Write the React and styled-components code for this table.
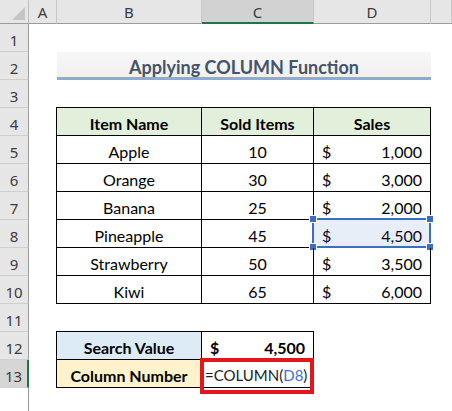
import React from "react";
import styled, { createGlobalStyle } from "styled-components";

const Global = createGlobalStyle`
  html, body { margin: 0; padding: 0; background: #fff; }
  body { font-family: Lato, "Open Sans", sans-serif; color: #000; }
`;

const Sheet = styled.div`
  display: grid;
  grid-template-columns: 29px 28px 145px 112px 117px 1fr;
  grid-template-rows: 24px repeat(13, 28px) 1fr;
  width: 452px;
  height: 411px;
  background: #fff;
  overflow: hidden;
`;

const Corner = styled.div`
  position: relative;
  background: #e6e6e6;
  border-right: 1px solid #bdbdbd;
  border-bottom: 1px solid #9b9b9b;
  &::after {
    content: "";
    position: absolute;
    right: 3px;
    bottom: 3px;
    border-left: 13px solid transparent;
    border-bottom: 13px solid #c4c4c4;
  }
`;

const ColHead = styled.div`
  display: flex;
  align-items: center;
  justify-content: center;
  background: ${p => (p.$active ? "#d2d2d2" : "#e6e6e6")};
  border-right: 1px solid #c8c8c8;
  border-bottom: ${p => (p.$active ? "2px solid #217346" : "1px solid #9b9b9b")};
  font-family: "Noto Sans", sans-serif;
  font-size: 15px;
  color: #3b3b3b;
  padding-top: ${p => (p.$active ? "1px" : "0")};
`;

const RowHead = styled.div`
  display: flex;
  align-items: center;
  justify-content: center;
  grid-column: 1;
  background: ${p => (p.$active ? "#d6d6d6" : "#e6e6e6")};
  border-bottom: 1px solid #cfcfcf;
  border-right: ${p => (p.$active ? "2px solid #217346" : "1px solid #9b9b9b")};
  font-family: "Noto Sans", sans-serif;
  font-size: 15px;
  color: #3b3b3b;
  padding-top: 4px;
  box-sizing: border-box;
`;

const RowFill = styled.div`
  grid-column: 1;
  border-right: 1px solid #9b9b9b;
`;

const Title = styled.div`
  grid-column: 3 / 6;
  grid-row: 3;
  display: flex;
  align-items: center;
  justify-content: center;
  background: linear-gradient(#f7f7f7, #f0f0f0);
  border-bottom: 3px solid #8ea9db;
  font-weight: 700;
  font-size: 18px;
  color: #44546a;
  box-sizing: border-box;
  padding-top: 4px;
`;

const Table = styled.div`
  grid-column: ${p => p.$cols};
  grid-row: ${p => p.$rows};
  display: grid;
  grid-template-columns: ${p => p.$widths};
  grid-auto-rows: 28px;
  border-top: 1px solid #000;
  border-left: 1px solid #000;
  margin-top: -1px;
  margin-left: -1px;
`;

const Cell = styled.div`
  position: relative;
  display: flex;
  align-items: center;
  justify-content: ${p => p.$justify || "center"};
  padding: 0 ${p => p.$pad || "4px"};
  background: ${p => p.$bg || "transparent"};
  border-right: 1px solid #000;
  border-bottom: 1px solid #000;
  font-size: 16px;
  font-weight: ${p => (p.$bold ? 700 : 400)};
  padding-top: 3px;
  white-space: nowrap;
`;

const Money = styled.span`
  display: flex;
  justify-content: space-between;
  width: 100%;
`;

const Selection = styled.div`
  position: absolute;
  left: -2px;
  top: -2px;
  right: -1px;
  bottom: -1px;
  border: 2px solid #3c6dbf;
  background: rgba(68, 114, 196, 0.12);
  pointer-events: none;
`;

const Handle = styled.span`
  position: absolute;
  width: 6px;
  height: 6px;
  background: #3c6dbf;
  border: 1px solid #fff;
  ${p => (p.$top ? "top: -5px;" : "bottom: -5px;")}
  ${p => (p.$left ? "left: -5px;" : "right: -5px;")}
`;

const Highlight = styled.div`
  position: absolute;
  left: -2px;
  top: -2px;
  right: -1px;
  bottom: -7px;
  border: 4px solid #e4161c;
  pointer-events: none;
`;

const Formula = styled.span`
  font-size: 15px;
  color: #222;
  & b {
    font-weight: 400;
    color: #4472c4;
  }
`;

const items = [
  ["Apple", 10, "1,000"],
  ["Orange", 30, "3,000"],
  ["Banana", 25, "2,000"],
  ["Pineapple", 45, "4,500"],
  ["Strawberry", 50, "3,500"],
  ["Kiwi", 65, "6,000"],
];

export default function App() {
  return (
    <>
      <Global />
      <Sheet>
        <Corner />
        <ColHead>A</ColHead>
        <ColHead>B</ColHead>
        <ColHead $active>C</ColHead>
        <ColHead>D</ColHead>
        <ColHead />

        {Array.from({ length: 13 }, (_, i) => (
          <RowHead key={i} style={{ gridRow: i + 2 }} $active={i === 12}>
            {i + 1}
          </RowHead>
        ))}
        <RowFill style={{ gridRow: 15 }} />

        <Title>Applying COLUMN Function</Title>

        <Table $cols="3 / 6" $rows="5 / 12" $widths="145px 112px 117px">
          <Cell $bg="#e2efda" $bold>Item Name</Cell>
          <Cell $bg="#e2efda" $bold>Sold Items</Cell>
          <Cell $bg="#e2efda" $bold>Sales</Cell>
          {items.map(([name, sold, sales]) => (
            <React.Fragment key={name}>
              <Cell>{name}</Cell>
              <Cell>{sold}</Cell>
              <Cell $pad="8px">
                <Money>
                  <span>$</span>
                  <span>{sales}</span>
                </Money>
                {name === "Pineapple" && (
                  <Selection>
                    <Handle $top $left />
                    <Handle $top />
                    <Handle $left />
                    <Handle />
                  </Selection>
                )}
              </Cell>
            </React.Fragment>
          ))}
        </Table>

        <Table $cols="3 / 5" $rows="13 / 15" $widths="145px 112px">
          <Cell $bg="#ddebf7" $bold>Search Value</Cell>
          <Cell $bold $pad="8px">
            <Money>
              <span>$</span>
              <span>4,500</span>
            </Money>
          </Cell>
          <Cell $bg="#fff2cc" $bold>Column Number</Cell>
          <Cell $justify="flex-start" $pad="3px">
            <Formula>
              =COLUMN(<b>D8</b>)
            </Formula>
            <Highlight />
          </Cell>
        </Table>
      </Sheet>
    </>
  );
}
